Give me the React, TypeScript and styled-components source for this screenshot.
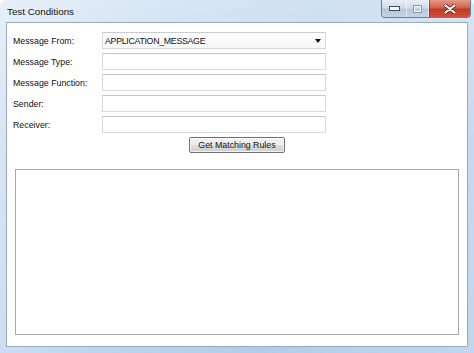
import React from 'react'
import styled, { createGlobalStyle } from 'styled-components'

const GlobalStyle = createGlobalStyle`
  html, body {
    margin: 0;
    padding: 0;
    width: 474px;
    height: 353px;
    overflow: hidden;
  }
  body {
    font-family: 'Liberation Sans', Arial, sans-serif;
  }
`

const Window = styled.div`
  width: 474px;
  height: 353px;
  box-sizing: border-box;
  display: flex;
  flex-direction: column;
  background: linear-gradient(
      100deg,
      rgba(255, 255, 255, 0.5) 0%,
      rgba(255, 255, 255, 0.2) 30%,
      rgba(255, 255, 255, 0.05) 60%,
      rgba(255, 255, 255, 0.25) 100%
    ),
    linear-gradient(180deg, #cfe0f2 0%, #b6cfea 40%, #adc9e8 100%);
  border-radius: 6px 6px 0 0;
`

const TitleBar = styled.div`
  height: 22px;
  display: flex;
  align-items: flex-start;
  justify-content: space-between;
  flex-shrink: 0;
`

const Title = styled.span`
  padding: 6px 0 0 7px;
  font-family: 'Liberation Sans', Arial, sans-serif;
  font-size: 9.8px;
  color: #111;
  text-shadow: 0 0 6px rgba(255, 255, 255, 0.9);
`

const CaptionGroup = styled.div`
  display: flex;
  height: 17px;
  margin-right: 3px;
  border: 1px solid rgba(60, 80, 110, 0.7);
  border-top: none;
  border-radius: 0 0 4px 4px;
  overflow: hidden;
`

const CaptionButton = styled.div<{ $close?: boolean; $w: number }>`
  width: ${(p) => p.$w}px;
  display: flex;
  align-items: center;
  justify-content: center;
  box-sizing: border-box;
  border-left: ${(p) => (p.$close ? '1px solid rgba(60,60,80,0.6)' : 'none')};
  border-right: ${(p) => (p.$close ? 'none' : '1px solid rgba(255,255,255,0.5)')};
  background: ${(p) =>
    p.$close
      ? 'linear-gradient(180deg, #e49a88 0%, #d0624d 45%, #c23a26 55%, #d24f36 100%)'
      : 'linear-gradient(180deg, #e6edf6 0%, #d2dcea 45%, #b7c7da 55%, #c6d4e4 100%)'};
`

const Client = styled.div`
  flex: 1;
  margin: 0 6px 6px 6px;
  border: 1px solid #96aac2;
  background: #ffffff;
  display: flex;
  flex-direction: column;
  padding: 9px 8px 11px 6px;
  min-height: 0;
`

const FormGrid = styled.div`
  display: grid;
  grid-template-columns: 89px 224px;
  grid-auto-rows: 17px;
  row-gap: 4px;
  align-items: center;
`

const Label = styled.label`
  font-size: 8.8px;
  color: #111;
`

const TextBox = styled.div`
  height: 17px;
  box-sizing: border-box;
  border: 1px solid #d6d9de;
  border-top-color: #c2c5ca;
  background: #ffffff;
`

const Combo = styled.div`
  height: 17px;
  box-sizing: border-box;
  border: 1px solid #d6d9de;
  border-top-color: #c8cbd0;
  background: linear-gradient(180deg, #ffffff 0%, #f7f7f7 100%);
  display: flex;
  align-items: center;
  justify-content: space-between;
  padding: 0 4px 0 2px;
  font-size: 8.8px;
  letter-spacing: -0.3px;
  color: #111;
`

const Arrow = styled.span`
  width: 0;
  height: 0;
  border-left: 3.5px solid transparent;
  border-right: 3.5px solid transparent;
  border-top: 4px solid #111;
  margin-top: 1px;
`

const ButtonRow = styled.div`
  display: flex;
  justify-content: center;
  margin-top: 4px;
  padding-left: 2px;
`

const PushButton = styled.button`
  width: 96px;
  height: 16px;
  padding: 0;
  box-sizing: border-box;
  border: 1px solid #707070;
  border-radius: 2px;
  background: linear-gradient(180deg, #f3f3f3 0%, #ebebeb 48%, #dddddd 52%, #cfcfcf 100%);
  box-shadow: inset 0 0 0 1px rgba(255, 255, 255, 0.7);
  font-family: 'Liberation Sans', Arial, sans-serif;
  font-size: 8.8px;
  color: #111;
`

const Output = styled.div`
  flex: 1;
  margin: 16px 0 0 2px;
  border: 1px solid #a9a9a9;
  background: #fff;
`

const fields = ['Message Type:', 'Message Function:', 'Sender:', 'Receiver:']

export default function App() {
  return (
    <>
      <GlobalStyle />
      <Window>
        <TitleBar>
          <Title>Test Conditions</Title>
          <CaptionGroup>
            <CaptionButton $w={25}>
              <svg width="11" height="5" viewBox="0 0 11 5">
                <rect x="0.5" y="0.5" width="10" height="4" fill="#fff" stroke="#3b4a5c" />
              </svg>
            </CaptionButton>
            <CaptionButton $w={22}>
              <svg width="9" height="8" viewBox="0 0 9 8">
                <rect x="0.5" y="0.5" width="8" height="7" fill="none" stroke="#8a99ab" />
                <rect x="1.5" y="1.5" width="6" height="5" fill="none" stroke="#f4f7fb" />
              </svg>
            </CaptionButton>
            <CaptionButton $close $w={41}>
              <svg width="12" height="10" viewBox="0 0 12 10">
                <path
                  d="M1.5 1.5 L10.5 8.5 M10.5 1.5 L1.5 8.5"
                  stroke="#6a2418"
                  strokeWidth="3.8"
                  strokeLinecap="round"
                />
                <path
                  d="M1.5 1.5 L10.5 8.5 M10.5 1.5 L1.5 8.5"
                  stroke="#fff"
                  strokeWidth="2.2"
                  strokeLinecap="round"
                />
              </svg>
            </CaptionButton>
          </CaptionGroup>
        </TitleBar>
        <Client>
          <FormGrid>
            <Label>Message From:</Label>
            <Combo>
              <span>APPLICATION_MESSAGE</span>
              <Arrow />
            </Combo>
            {fields.map((f) => (
              <React.Fragment key={f}>
                <Label>{f}</Label>
                <TextBox />
              </React.Fragment>
            ))}
          </FormGrid>
          <ButtonRow>
            <PushButton>Get Matching Rules</PushButton>
          </ButtonRow>
          <Output />
        </Client>
      </Window>
    </>
  )
}
